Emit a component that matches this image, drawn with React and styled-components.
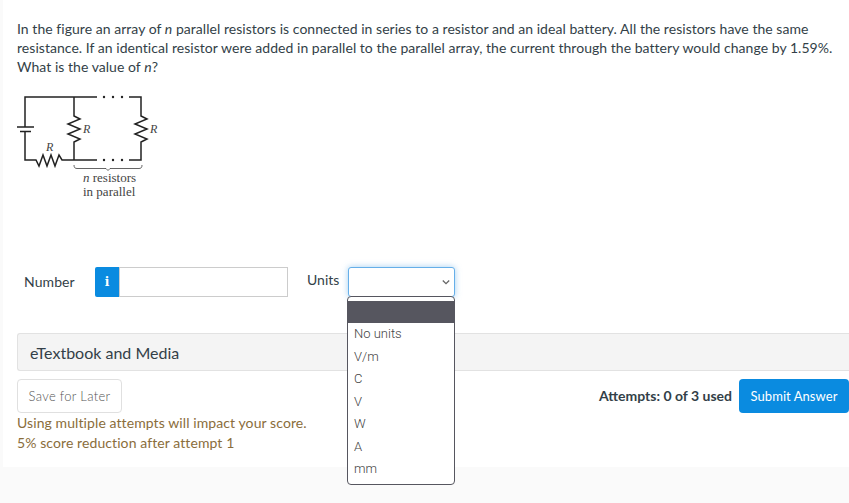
import React from "react";
import styled, { createGlobalStyle } from "styled-components";

const Global = createGlobalStyle`
  html, body { margin: 0; padding: 0; background: #fafafa; }
  body { font-family: Lato, "Liberation Sans", sans-serif; color: #333f48; }
`;
const Page = styled.div`
  width: 849px; height: 503px; overflow: hidden; background: #fafafa;
`;
const Card = styled.main`
  margin-left: 3px; height: 467px; background: #fff; padding: 19px 0 0 14px; box-sizing: border-box;
`;
const Question = styled.p`
  margin: 0; width: 832px; font-size: 14px; line-height: 19px; letter-spacing: .04px; color: #333f48; height: 57px;
`;
const Figure = styled.svg`
  display: block; margin: 14px 0 0 -14px; width: 170px; height: 120px;
`;
const AnswerRow = styled.div`
  display: flex; align-items: flex-start; margin-top: 57px; height: 30px; margin-left: 7px;
`;
const NumberLabel = styled.label`
  font-size: 14px; line-height: 30px; width: 71px; letter-spacing: .1px; color: #333f48;
`;
const InfoTag = styled.span`
  width: 24px; height: 30px; box-sizing: border-box; background: #0a8be0; color: #fff; border-radius: 2px 0 0 2px;
  display: flex; align-items: center; justify-content: center;
  font: bold 12px "DejaVu Serif", serif;
`;
const NumberInput = styled.div`
  width: 169px; height: 30px; box-sizing: border-box; border: 1px solid #ccc; background: #fff;
`;
const UnitsLabel = styled.label`
  font-size: 14px; line-height: 26px; margin-left: 19px; width: 41px; color: #333f48;
`;
const SelectWrap = styled.div`
  position: relative; width: 107px; height: 30px;
`;
const SelectBox = styled.div`
  width: 107px; height: 30px; box-sizing: border-box; border: 1px solid #66afe9; border-radius: 3px;
  background: #fff; box-shadow: 0 0 6px rgba(102,175,233,.6);
  display: flex; align-items: center; justify-content: flex-end; padding-right: 2px;
`;
const Menu = styled.ul`
  position: absolute; left: -1px; top: 29px; width: 108px; height: 189px; box-sizing: border-box; margin: 0;
  padding: 4px 0 0; list-style: none; background: #fff; border: 1px solid #56565f; border-radius: 4px; z-index: 3;
`;
const MenuItem = styled.li`
  height: ${p => (p.$blank ? 22 : 22.5)}px; line-height: 22px; padding-left: 6px; font-size: 13px;
  font-family: Roboto, sans-serif; font-weight: 300; color: #444;
  background: ${p => (p.$blank ? "#56565f" : "transparent")};
`;
const Accordion = styled.section`
  margin-top: 36px; height: 38px; box-sizing: border-box; background: #f4f4f4; border: 1px solid #e2e2e2; border-right: 0;
  border-radius: 3px 0 0 3px; padding-left: 12px; font-size: 16px; line-height: 37px; color: #333f48;
`;
const ActionBar = styled.div`
  display: flex; justify-content: space-between; margin-top: 8px;
`;
const Left = styled.div`
  display: flex; flex-direction: column; align-items: flex-start;
`;
const SaveButton = styled.button`
  width: 105px; height: 34px; background: #fff; border: 1px solid #e0e0e0; border-radius: 4px;
  font: 300 13px Lato, sans-serif; letter-spacing: .3px; color: #555; padding: 0;
`;
const Notice = styled.div`
  font-size: 14px; line-height: 20px; letter-spacing: .09px; color: #8a6d3b;
`;
const Right = styled.div`
  display: flex; align-items: flex-start;
`;
const Attempts = styled.span`
  font-size: 14px; font-weight: 700; line-height: 33px; margin-right: 7px; color: #333f48;
`;
const SubmitButton = styled.button`
  width: 110px; height: 34px; background: #0a8be0; border: 0; border-radius: 4px; color: #fff;
  font: 13px Lato, sans-serif; letter-spacing: .05px; padding: 0;
`;
const Chevron = () => (
  <svg width="12" height="12" viewBox="0 0 12 12"><path d="M2.8 4.5 6 7.7l3.2-3.2" fill="none" stroke="#666" strokeWidth="1.3" /></svg>
);
const Circuit = () => (
  <Figure viewBox="3 90 170 120">
    <g fill="none" stroke="#222" strokeWidth="1.5">
      <path d="M97 97H25V127M25 131V160H36L39 166 43 155 47 166 51 155 55 166 59 155 62 160H97" />
      <path d="M17 127H34M20 131.5H31" strokeWidth="1.7" />
      <path d="M74 97V116L80 119 68 124 80 129 68 134 80 139 74 142V160" />
      <path d="M129 97H141V116L147 119 135 124 147 129 135 134 147 139 141 142V160H129" />
      <path d="M74 165c0 2.500 1 3.500 3 3.500h29l2 2 2-2h29c2 0 3-1 3-3.500" strokeWidth=".7" />
    </g>
    <g fill="#222">
      <circle cx="104" cy="97" r="1.2"/><circle cx="113" cy="97" r="1.2"/><circle cx="122" cy="97" r="1.2"/>
      <circle cx="104" cy="160" r="1.2"/><circle cx="113" cy="160" r="1.2"/><circle cx="122" cy="160" r="1.2"/>
    </g>
    <g fontFamily="'Liberation Serif', serif" fill="#444">
      <text x="83" y="133" fontSize="12" fontStyle="italic">R</text>
      <text x="150" y="133" fontSize="12" fontStyle="italic">R</text>
      <text x="46" y="151" fontSize="12" fontStyle="italic">R</text>
      <text x="83" y="182" fontSize="13"><tspan fontStyle="italic">n</tspan> resistors</text>
      <text x="83" y="196" fontSize="13">in parallel</text>
    </g>
  </Figure>
);

export default function App() {
  return (
    <Page>
      <Global />
      <Card>
        <Question>
          In the figure an array of <i>n</i> parallel resistors is connected in series to a resistor and an ideal battery. All the resistors have the same resistance. If an identical resistor were added in parallel to the parallel array, the current through the battery would change by 1.59%. What is the value of <i>n</i>?
        </Question>
        <Circuit />
        <AnswerRow>
          <NumberLabel>Number</NumberLabel>
          <InfoTag>i</InfoTag>
          <NumberInput />
          <UnitsLabel>Units</UnitsLabel>
          <SelectWrap>
            <SelectBox><Chevron /></SelectBox>
            <Menu>
              <MenuItem $blank />
              {["No units", "V/m", "C", "V", "W", "A", "mm"].map(u => <MenuItem key={u}>{u}</MenuItem>)}
            </Menu>
          </SelectWrap>
        </AnswerRow>
        <Accordion>eTextbook and Media</Accordion>
        <ActionBar>
          <Left>
            <SaveButton>Save for Later</SaveButton>
            <Notice>Using multiple attempts will impact your score.<br />5% score reduction after attempt 1</Notice>
          </Left>
          <Right>
            <Attempts>Attempts: 0 of 3 used</Attempts>
            <SubmitButton>Submit Answer</SubmitButton>
          </Right>
        </ActionBar>
      </Card>
    </Page>
  );
}
